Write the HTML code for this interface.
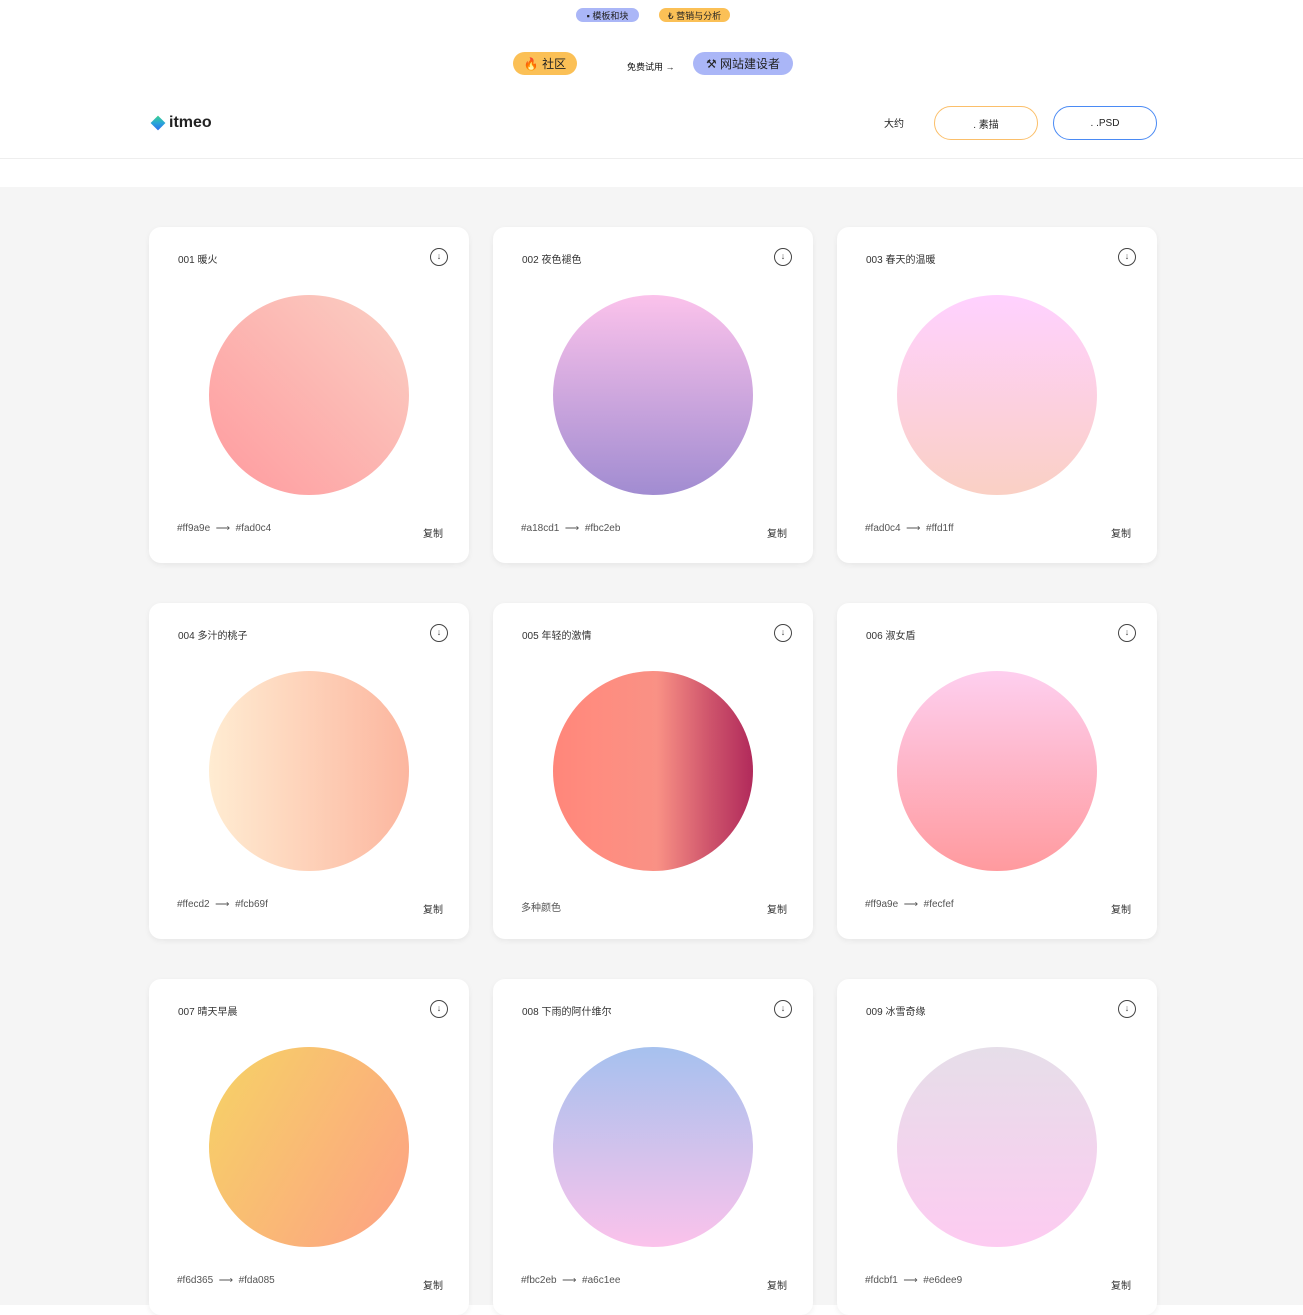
<!DOCTYPE html>
<html><head><meta charset="utf-8"><style>
*{margin:0;padding:0;box-sizing:border-box}
body{width:1303px;height:1305px;overflow:hidden;background:#fff;font-family:"Liberation Sans","Noto Sans CJK SC",sans-serif;color:#333;position:relative}
.abs{position:absolute}
.pill{position:absolute;border-radius:12px;display:flex;align-items:center;justify-content:center;color:#222}
.gray{position:absolute;left:0;top:187px;width:1303px;height:1118px;background:#f5f5f5}
.card{position:absolute;width:320px;height:336px;background:#fff;border-radius:12px;box-shadow:0 2px 6px rgba(0,0,0,.06)}
.card .t{position:absolute;left:29px;top:24px;font-size:10px;color:#333}
.card .ic{position:absolute;left:281px;top:21px;width:18px;height:18px;border:1.3px solid #444;border-radius:50%;font-size:9px;line-height:15px;text-align:center;color:#444}
.card .c{position:absolute;left:60px;top:68px;width:200px;height:200px;border-radius:50%}
.card .h{position:absolute;left:28px;top:296px;font-size:10px;color:#555}
.card .cp{position:absolute;left:274px;top:298px;font-size:10px;color:#333}
</style></head><body>
<div class="pill" style="left:576px;top:8px;width:63px;height:14px;background:#aab6f7;font-size:9px">▪ 模板和块</div>
<div class="pill" style="left:659px;top:8px;width:71px;height:14px;background:#fbc056;font-size:9px">₺ 营销与分析</div>
<div class="pill" style="left:513px;top:52px;width:64px;height:23px;background:#fbc056;font-size:12px">🔥 社区</div>
<div class="abs" style="left:627px;top:60px;font-size:9px;color:#111">免费试用 →</div>
<div class="pill" style="left:693px;top:52px;width:100px;height:23px;background:#aab6f7;font-size:12px">⚒ 网站建设者</div>
<div class="abs" style="left:151px;top:116px;width:14px;height:14px;background:linear-gradient(135deg,#3ad28c,#2aa6d8 50%,#2d6cf0);transform:rotate(45deg) scale(.75)"></div>
<div class="abs" style="left:169px;top:114px;font-size:16px;font-weight:bold;color:#222">itmeo</div>
<div class="abs" style="left:884px;top:115px;font-size:10px;color:#222">大约</div>
<div class="pill" style="left:934px;top:106px;width:104px;height:34px;border:1px solid #fbbf6a;border-radius:17px;font-size:10px;background:#fff">. 素描</div>
<div class="pill" style="left:1053px;top:106px;width:104px;height:34px;border:1px solid #4a8af4;border-radius:17px;font-size:10px;background:#fff">. .PSD</div>
<div class="abs" style="left:0;top:158px;width:1303px;height:1px;background:#eee"></div>
<div class="gray"></div>

<div class="card" style="left:149px;top:227px"><div class="t">001 暖火</div><div class="ic">↓</div><div class="c" style="background:linear-gradient(45deg,#ff9a9e,#fad0c4)"></div><div class="h">#ff9a9e &nbsp;⟶&nbsp; #fad0c4</div><div class="cp">复制</div></div>
<div class="card" style="left:493px;top:227px"><div class="t">002 夜色褪色</div><div class="ic">↓</div><div class="c" style="background:linear-gradient(0deg,#a18cd1,#fbc2eb)"></div><div class="h">#a18cd1 &nbsp;⟶&nbsp; #fbc2eb</div><div class="cp">复制</div></div>
<div class="card" style="left:837px;top:227px"><div class="t">003 春天的温暖</div><div class="ic">↓</div><div class="c" style="background:linear-gradient(0deg,#fad0c4,#ffd1ff)"></div><div class="h">#fad0c4 &nbsp;⟶&nbsp; #ffd1ff</div><div class="cp">复制</div></div>

<div class="card" style="left:149px;top:603px"><div class="t">004 多汁的桃子</div><div class="ic">↓</div><div class="c" style="background:linear-gradient(90deg,#ffecd2,#fcb69f)"></div><div class="h">#ffecd2 &nbsp;⟶&nbsp; #fcb69f</div><div class="cp">复制</div></div>
<div class="card" style="left:493px;top:603px"><div class="t">005 年轻的激情</div><div class="ic">↓</div><div class="c" style="background:linear-gradient(90deg,#ff8177 0%,#ff867a 0%,#ff8c7f 21%,#f99185 52%,#cf556c 78%,#b12a5b 100%)"></div><div class="h">多种颜色</div><div class="cp">复制</div></div>
<div class="card" style="left:837px;top:603px"><div class="t">006 淑女盾</div><div class="ic">↓</div><div class="c" style="background:linear-gradient(0deg,#ff9a9e,#fecfef)"></div><div class="h">#ff9a9e &nbsp;⟶&nbsp; #fecfef</div><div class="cp">复制</div></div>

<div class="card" style="left:149px;top:979px"><div class="t">007 晴天早晨</div><div class="ic">↓</div><div class="c" style="background:linear-gradient(120deg,#f6d365,#fda085)"></div><div class="h">#f6d365 &nbsp;⟶&nbsp; #fda085</div><div class="cp">复制</div></div>
<div class="card" style="left:493px;top:979px"><div class="t">008 下雨的阿什维尔</div><div class="ic">↓</div><div class="c" style="background:linear-gradient(0deg,#fbc2eb,#a6c1ee)"></div><div class="h">#fbc2eb &nbsp;⟶&nbsp; #a6c1ee</div><div class="cp">复制</div></div>
<div class="card" style="left:837px;top:979px"><div class="t">009 冰雪奇缘</div><div class="ic">↓</div><div class="c" style="background:linear-gradient(0deg,#fdcbf1,#e6dee9)"></div><div class="h">#fdcbf1 &nbsp;⟶&nbsp; #e6dee9</div><div class="cp">复制</div></div>
</body></html>
